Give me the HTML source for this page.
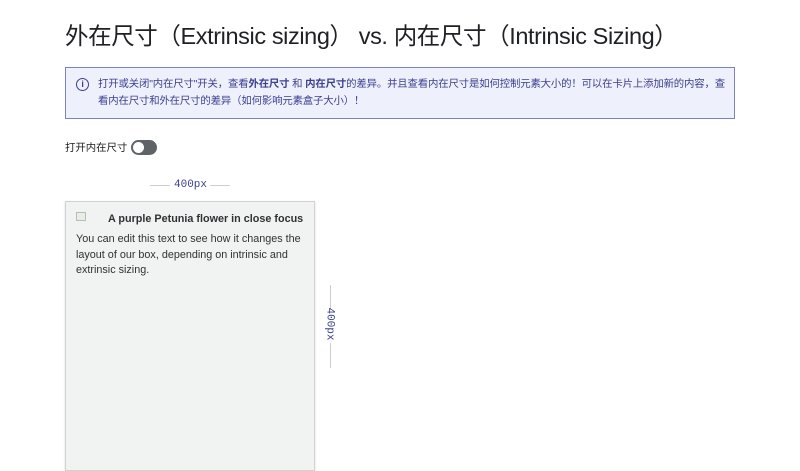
<!DOCTYPE html>
<html><head><meta charset="utf-8"><style>
*{margin:0;padding:0;box-sizing:border-box}
body{width:800px;height:450px;overflow:hidden;background:#fff;font-family:"Liberation Sans","Noto Sans CJK SC",sans-serif;color:#202124;position:relative}
h1{position:absolute;left:65px;top:17px;font-size:23.5px;font-weight:normal;white-space:nowrap;letter-spacing:-0.4px}
.info{position:absolute;left:65px;top:67px;width:670px;height:52px;background:#eef0fb;border:1px solid #7c80c6;color:#3c3f8f;font-size:10.4px;line-height:17px;padding:8px 0 0 32px;white-space:nowrap;letter-spacing:-0.15px}
.info .ic{position:absolute;left:10px;top:10px;width:13px;height:13px;border:1.5px solid #3c3f8f;border-radius:50%;font-size:9px;line-height:10px;text-align:center;font-weight:bold}
.tog{position:absolute;left:65px;top:139px;font-size:10.4px;color:#202124}
.sw{position:absolute;left:131px;top:140px;width:26px;height:15px;background:#5f6368;border-radius:8px}
.sw:after{content:"";position:absolute;left:2px;top:2px;width:11px;height:11px;border-radius:50%;background:#fff}
.lbl{position:absolute;font-family:"Liberation Mono",monospace;font-size:11px;color:#3c3f8f}
.line{position:absolute;background:#ccc}
.card{position:absolute;left:65px;top:201px;width:250px;height:270px;background:#f1f3f2;border:1px solid #d0d2d1;box-shadow:0 1px 2px rgba(0,0,0,.15)}
.cap{position:absolute;left:42px;top:11px;font-size:10.8px;font-weight:bold;color:#303134;white-space:nowrap}
.img{position:absolute;left:10px;top:10px;width:10px;height:9px;border:1px solid #bbb;background:#e6efe6}
.txt{position:absolute;left:10px;top:30px;width:235px;font-size:10.8px;line-height:15.5px;color:#303134}
</style></head><body>
<h1>外在尺寸（Extrinsic sizing） vs. 内在尺寸（Intrinsic Sizing）</h1>
<div class="info"><span class="ic">i</span>打开或关闭"内在尺寸"开关，查看<b>外在尺寸</b> 和 <b>内在尺寸</b>的差异。并且查看内在尺寸是如何控制元素大小的！可以在卡片上添加新的内容，查<br>看内在尺寸和外在尺寸的差异（如何影响元素盒子大小）！</div>
<div class="tog">打开内在尺寸</div><div class="sw"></div>
<div class="line" style="left:150px;top:185px;width:20px;height:1px"></div>
<div class="lbl" style="left:174px;top:179px">400px</div>
<div class="line" style="left:210px;top:185px;width:20px;height:1px"></div>
<div class="line" style="left:330px;top:285px;width:1px;height:25px"></div>
<div class="lbl" style="left:313px;top:318px;transform:rotate(90deg);transform-origin:center">400px</div>
<div class="line" style="left:330px;top:343px;width:1px;height:25px"></div>
<div class="card"><div class="img"></div><div class="cap">A purple Petunia flower in close focus</div>
<div class="txt">You can edit this text to see how it changes the layout of our box, depending on intrinsic and extrinsic sizing.</div></div>
</body></html>
